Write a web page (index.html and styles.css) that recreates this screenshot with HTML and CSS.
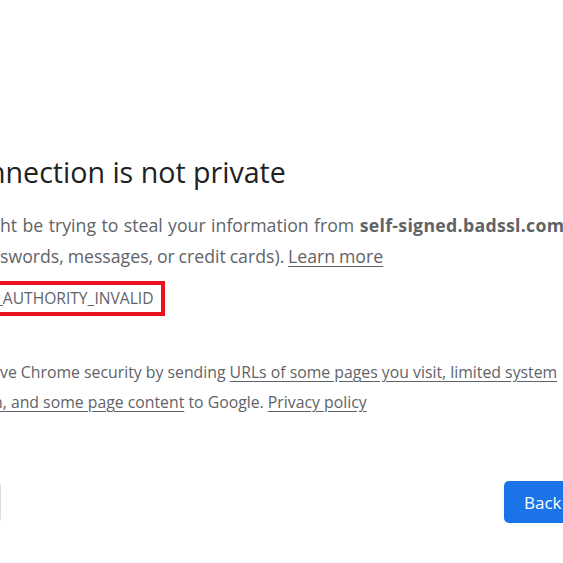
FILE: index.html
```html
<!DOCTYPE html>
<html lang="en">
<head>
<meta charset="utf-8">
<title>Privacy error</title>
<link rel="stylesheet" href="styles.css">
</head>
<body>
<div class="page">
  <main class="content">
    <h1 class="title"><span class="cut cut-title">nnection is not private</span></h1>
    <p class="lead">
      <span class="line">ht be trying to steal your information from <strong>self-signed.badssl.com</strong></span>
      <span class="line">swords, messages, or credit cards). <a href="#">Learn more</a></span>
    </p>
    <div class="error-box"><span class="cut cut-code">_AUTHORITY_INVALID</span></div>
    <p class="optin">
      <span class="line">ve Chrome security by sending <a href="#">URLs of some pages you visit, limited system</a></span>
      <span class="line"><a href="#" class="cut cut-info">n, and some page content</a> to Google. <a href="#">Privacy policy</a></span>
    </p>
    <div class="buttons">
      <button class="btn-secondary" type="button">Advanced</button>
      <button class="btn-primary" type="button">Back to safety</button>
    </div>
  </main>
</div>
</body>
</html>
```
FILE: styles.css
```css
html, body {
  margin: 0;
  padding: 0;
  background: #ffffff;
}
body {
  width: 563px;
  height: 563px;
  overflow: hidden;
  font-family: "Open Sans", "Noto Sans", sans-serif;
  color: #5f6368;
}
.page {
  width: 563px;
  height: 563px;
  overflow: hidden;
}
.content {
  padding-top: 150px;
  display: flex;
  flex-direction: column;
}
.title {
  margin: 0;
  font-size: 28.6px;
  font-weight: 400;
  line-height: 44px;
  color: #202124;
  white-space: nowrap;
}
.cut { display: inline-block; }
.cut-title { margin-left: -12px; }
.lead {
  margin: 16px 0 0 0;
  font-size: 17.7px;
  line-height: 31px;
  white-space: nowrap;
}
.line { display: block; }
.lead strong { font-weight: 700; color: #5f6368; letter-spacing: 0.3px; }
.lead .line:first-child { word-spacing: 0.8px; }
.lead .line:last-child { word-spacing: -0.8px; }
a {
  color: #5f6368;
  text-decoration: underline;
  text-underline-offset: 3px;
}
.error-box {
  margin-top: 9px;
  margin-left: -10px;
  width: 167px;
  height: 27px;
  border: 4px solid #e8131f;
  font-size: 15.6px;
  line-height: 27px;
  white-space: nowrap;
  overflow: hidden;
}
.cut-code { margin-left: 2px; }
.optin {
  margin: 41px 0 0 0;
  font-size: 15.8px;
  line-height: 30px;
  white-space: nowrap;
}
.cut-info { margin-left: -7px; }
.buttons {
  margin-top: 64px;
  display: flex;
  justify-content: space-between;
  align-items: center;
}
.btn-secondary, .btn-primary {
  font-family: "Open Sans", "Noto Sans", sans-serif;
  font-size: 17px;
  height: 42px;
  border-radius: 5px;
  padding: 0 20px;
  white-space: nowrap;
}
.btn-secondary {
  margin-left: -120px;
  width: 121px;
  background: #ffffff;
  border: 1px solid #dadce0;
  color: #1a73e8;
}
.btn-primary {
  margin-right: -91px;
  background: #1a73e8;
  border: none;
  color: #ffffff;
  text-align: left;
}
```
